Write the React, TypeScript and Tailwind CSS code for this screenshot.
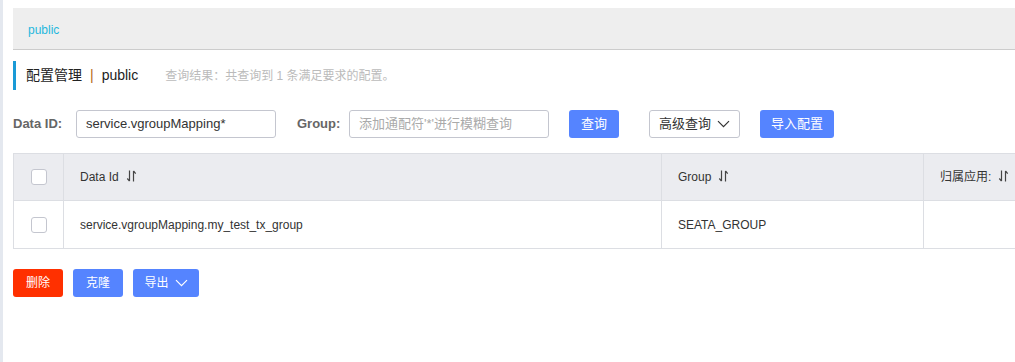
import React from "react";

const font = { fontFamily: '"Liberation Sans", "Noto Sans CJK SC", sans-serif' };

function SortIcon() {
  return (
    <svg width="11" height="14" viewBox="0 0 11 14" className="inline-block ml-[7px] -mt-[3px]">
      <path d="M3.5 1.5v10.5M1.3 9.5l2.2 2.6" stroke="#444" strokeWidth="1.2" fill="none" />
      <path d="M7.5 12.5V2M7.5 2l2.2 2.6" stroke="#444" strokeWidth="1.2" fill="none" />
    </svg>
  );
}

function Chevron({ color = "#333" }: { color?: string }) {
  return (
    <svg width="13" height="8" viewBox="0 0 13 8" className="inline-block ml-[6px]">
      <path d="M1 1.2l5.5 5.5 5.5-5.5" stroke={color} strokeWidth="1.2" fill="none" />
    </svg>
  );
}

function Checkbox() {
  return <div className="w-4 h-4 border border-[#c4c6cf] rounded-[3px] bg-white" />;
}

export default function App() {
  return (
    <div className="w-[1015px] h-[362px] bg-white flex overflow-hidden" style={font}>
      <div className="w-[3px] h-full bg-[#e4e8ef] shrink-0" />
      <div className="flex-1 pl-[10px] pt-[8px] overflow-hidden">
        <div className="h-[42px] bg-[#eeeeee] border-b border-[#cccccc] flex items-center pl-[15px] pt-[3px]">
          <span className="text-[12px] text-[#26b8dd]">public</span>
        </div>
        <div className="mt-[11px] h-[29px] border-l-[3px] border-[#1a9ad6] flex items-center pl-[10px]">
          <span className="text-[14px] text-[#222]">配置管理</span>
          <span className="text-[14px] text-[#b46a1a] mx-[8px]">|</span>
          <span className="text-[14px] text-[#222]">public</span>
          <span className="text-[12px] text-[#bbbbbb] ml-[27px]">查询结果：共查询到 1 条满足要求的配置。</span>
        </div>
        <div className="mt-[20px] flex items-center h-[28px]">
          <span className="text-[13px] font-bold text-[#666] w-[63px]">Data ID:</span>
          <div className="w-[200px] h-[28px] border border-[#c4c6cf] rounded-[3px] flex items-center px-[9px] text-[13px] text-[#333]">
            service.vgroupMapping*
          </div>
          <span className="text-[13px] font-bold text-[#666] ml-[21px] w-[52px]">Group:</span>
          <div className="w-[200px] h-[28px] border border-[#c4c6cf] rounded-[3px] flex items-center px-[9px] text-[13px] text-[#aaa]">
            添加通配符'*'进行模糊查询
          </div>
          <div className="ml-[20px] w-[50px] h-[28px] bg-[#5584ff] rounded-[3px] text-white text-[13px] flex items-center justify-center">查询</div>
          <div className="ml-[30px] w-[91px] h-[28px] border border-[#c4c6cf] rounded-[3px] text-[#333] text-[13px] flex items-center justify-center">
            高级查询<Chevron />
          </div>
          <div className="ml-[20px] w-[74px] h-[28px] bg-[#5584ff] rounded-[3px] text-white text-[13px] flex items-center justify-center">导入配置</div>
        </div>
        <div className="mt-[15px] w-[1120px] border border-[#dcdee3] text-[12px] text-[#333]">
          <div className="flex h-[47px] bg-[#ebecf0] border-b border-[#dcdee3]">
            <div className="w-[50px] border-r border-[#dcdee3] flex items-center justify-center"><Checkbox /></div>
            <div className="w-[598px] border-r border-[#dcdee3] flex items-center pl-[16px]">Data Id<SortIcon /></div>
            <div className="w-[262px] border-r border-[#dcdee3] flex items-center pl-[16px]">Group<SortIcon /></div>
            <div className="flex-1 flex items-center pl-[16px]">归属应用:<SortIcon /></div>
          </div>
          <div className="flex h-[47px] bg-white">
            <div className="w-[50px] border-r border-[#dcdee3] flex items-center justify-center"><Checkbox /></div>
            <div className="w-[598px] border-r border-[#dcdee3] flex items-center pl-[16px]">service.vgroupMapping.my_test_tx_group</div>
            <div className="w-[262px] border-r border-[#dcdee3] flex items-center pl-[16px]">SEATA_GROUP</div>
            <div className="flex-1" />
          </div>
        </div>
        <div className="mt-[20px] flex gap-[10px]">
          <div className="w-[50px] h-[28px] bg-[#ff3000] rounded-[3px] text-white text-[12px] flex items-center justify-center">删除</div>
          <div className="w-[50px] h-[28px] bg-[#5584ff] rounded-[3px] text-white text-[12px] flex items-center justify-center">克隆</div>
          <div className="w-[66px] h-[28px] bg-[#5584ff] rounded-[3px] text-white text-[12px] flex items-center justify-center">导出<Chevron color="#fff" /></div>
        </div>
      </div>
    </div>
  );
}
